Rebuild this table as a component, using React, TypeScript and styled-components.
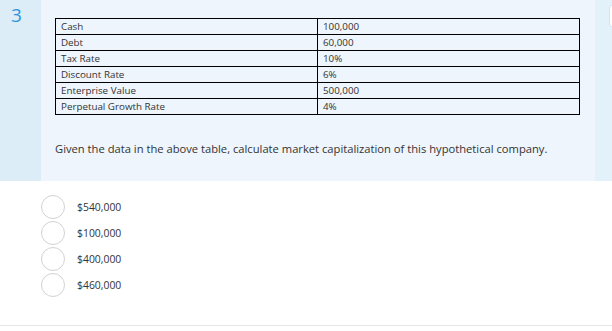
import styled, { createGlobalStyle } from "styled-components";

const GlobalStyle = createGlobalStyle`
  html, body {
    margin: 0;
    padding: 0;
    background: #ffffff;
  }
  body {
    font-family: "Open Sans", "Liberation Sans", sans-serif;
    color: #333333;
  }
`;

interface Row {
  label: string;
  value: string;
}

const rows: Row[] = [
  { label: "Cash", value: "100,000" },
  { label: "Debt", value: "60,000" },
  { label: "Tax Rate", value: "10%" },
  { label: "Discount Rate", value: "6%" },
  { label: "Enterprise Value", value: "500,000" },
  { label: "Perpetual Growth Rate", value: "4%" },
];

const answers = ["$540,000", "$100,000", "$400,000", "$460,000"];

const Page = styled.div`
  width: 612px;
  height: 331px;
  overflow: hidden;
`;

const QuestionBlock = styled.div`
  display: flex;
  height: 181px;
`;

const NumberCol = styled.div`
  width: 41px;
  flex-shrink: 0;
  background: #dcedf8;
  padding: 2px 0 0 11px;
  box-sizing: border-box;
  font-size: 19px;
  line-height: 26px;
  color: #2f95dc;
`;

const Content = styled.div`
  flex: 1;
  background: #eef5fc;
  padding: 18px 15px 0 14px;
  box-sizing: border-box;
`;

const SideStrip = styled.div`
  width: 17px;
  flex-shrink: 0;
  background: #e3f1fa;
  overflow: hidden;
  padding: 5px 0 0 14px;
  box-sizing: border-box;
`;

const FlagBox = styled.div`
  width: 20px;
  height: 22px;
  background: #ffffff;
  border: 1px solid #d6e4ee;
  border-radius: 3px;
  box-sizing: border-box;
`;

const DataTable = styled.table`
  width: 525px;
  border-collapse: collapse;
  font-size: 9.8px;
`;

const Cell = styled.td<{ $first?: boolean }>`
  border: 1px solid #000000;
  height: 15px;
  padding: 0 0 0 5px;
  line-height: 15px;
  width: ${(p) => (p.$first ? "256px" : "auto")};
  color: #333333;
`;

const Prompt = styled.p`
  margin: 26px 0 0;
  font-size: 11.2px;
  line-height: 15px;
  color: #333333;
`;

const Options = styled.ul`
  list-style: none;
  margin: 0;
  padding: 14px 0 0 41px;
  display: flex;
  flex-direction: column;
  gap: 2px;
  height: 145px;
  box-sizing: border-box;
  border-bottom: 1px solid #e6e6e6;
`;

const Option = styled.li`
  display: flex;
  align-items: center;
  gap: 12px;
  height: 24px;
  font-size: 10.4px;
  color: #333333;
`;

const Radio = styled.span`
  width: 24px;
  height: 24px;
  border-radius: 50%;
  border: 1px solid #d2d2d2;
  background: #ffffff;
  box-sizing: border-box;
  flex-shrink: 0;
`;

function App() {
  return (
    <Page>
      <GlobalStyle />
      <QuestionBlock>
        <NumberCol>3</NumberCol>
        <Content>
          <DataTable>
            <tbody>
              {rows.map((r) => (
                <tr key={r.label}>
                  <Cell $first>{r.label}</Cell>
                  <Cell>{r.value}</Cell>
                </tr>
              ))}
            </tbody>
          </DataTable>
          <Prompt>
            Given the data in the above table, calculate market capitalization
            of this hypothetical company.
          </Prompt>
        </Content>
        <SideStrip>
          <FlagBox />
        </SideStrip>
      </QuestionBlock>
      <Options>
        {answers.map((a) => (
          <Option key={a}>
            <Radio />
            {a}
          </Option>
        ))}
      </Options>
    </Page>
  );
}

export default App;
